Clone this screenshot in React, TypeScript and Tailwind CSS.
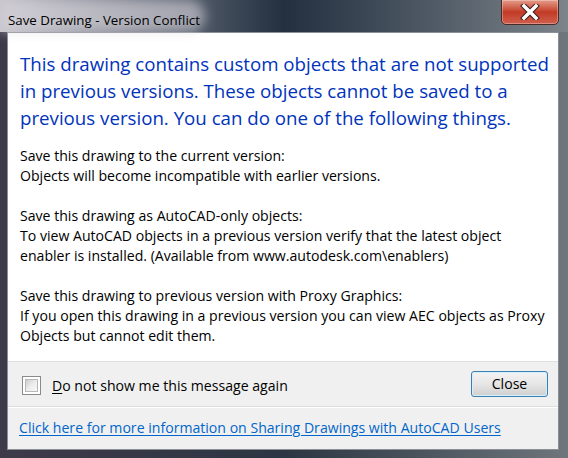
import React from 'react';

const uiFont = { fontFamily: '"Segoe UI", "Open Sans", "Noto Sans", sans-serif' };

function CloseButton() {
  return (
    <button
      type="button"
      className="relative mt-[-1px] flex h-[26px] w-[58px] items-center justify-center rounded-b-[5px] border border-[#4a2a26] bg-gradient-to-b from-[#e39c8a] via-[#c23a25] to-[#cf5f4c] shadow-[inset_0_0_0_1px_rgba(255,255,255,0.3)]"
      title="Close"
    >
      <svg width="20" height="16" viewBox="0 0 20 16">
        <path
          d="M4 2 L16 14 M16 2 L4 14"
          stroke="#3a1d18"
          strokeWidth="5.5"
          strokeLinecap="square"
        />
        <path
          d="M4 2 L16 14 M16 2 L4 14"
          stroke="#ffffff"
          strokeWidth="3.5"
          strokeLinecap="square"
        />
      </svg>
    </button>
  );
}

const body = [
  'Save this drawing to the current version:',
  'Objects will become incompatible with earlier versions.',
  '',
  'Save this drawing as AutoCAD-only objects:',
  'To view AutoCAD objects in a previous version verify that the latest object',
  'enabler is installed. (Available from www.autodesk.com\\enablers)',
  '',
  'Save this drawing to previous version with Proxy Graphics:',
  'If you open this drawing in a previous version you can view AEC objects as Proxy',
  'Objects but cannot edit them.',
];

export default function App() {
  return (
    <div
      className="flex h-[458px] w-[568px] flex-col overflow-hidden bg-gradient-to-r from-[#3e3a4a] via-[#2c3642] to-[#6f767c]"
      style={uiFont}
    >
      {/* title bar */}
      <div className="flex h-[32px] shrink-0 items-start justify-between bg-gradient-to-r from-[#c6c4cc] via-[#233040] to-[#7d848a] pr-[9px]">
        <div className="relative pl-[8px] pt-[7px]">
          <div className="absolute left-0 top-0 h-[32px] w-[205px] rounded-r-full bg-[#d8d6dc]/60 blur-[6px]" />
          <span className="relative whitespace-nowrap text-[13.3px] leading-[20px] text-black">
            Save Drawing - Version Conflict
          </span>
        </div>
        <CloseButton />
      </div>

      {/* client area */}
      <div className="ml-[7px] mr-[9px] flex h-[418px] shrink-0 flex-col border border-[#8a9096] bg-[#f0f0f0]">
        <div className="flex flex-col bg-white pb-[15px] pl-[12px] pt-[17px]">
          <div className="text-[18.7px] leading-[27px] text-[#0033bc]">
            <div className="whitespace-nowrap">This drawing contains custom objects that are not supported</div>
            <div className="whitespace-nowrap">in previous versions. These objects cannot be saved to a</div>
            <div className="whitespace-nowrap">previous version. You can do one of the following things.</div>
          </div>
          <div className="mt-[15px] text-[14.1px] leading-[20px] text-black">
            {body.map((line, i) => (
              <div key={i} className="h-[20px] whitespace-nowrap">
                {line}
              </div>
            ))}
          </div>
        </div>

        <div className="flex h-[45px] items-center justify-between border-t border-[#dfdfdf] pl-[14px] pr-[10px]">
          <label className="flex items-center gap-[11px] pt-[3px] text-[14.1px] leading-[20px] text-black">
            <span className="block h-[19px] w-[19px] border border-[#8a8a8a] bg-white p-[2px]">
              <span className="block h-full w-full border border-[#b8b8b8] bg-gradient-to-br from-[#cdcdcd] via-[#ececec] to-[#f8f8f8]" />
            </span>
            <span className="whitespace-nowrap">
              <span className="underline underline-offset-2">D</span>o not show me this message again
            </span>
          </label>
          <button
            type="button"
            className="h-[26px] w-[77px] rounded-[3px] border border-[#3c7fb1] bg-gradient-to-b from-[#f4f4f4] via-[#e6e6e6] to-[#cfcfcf] text-[14.1px] leading-[20px] text-black shadow-[inset_0_0_0_1px_#d6f0fb]"
          >
            Close
          </button>
        </div>

        <div className="flex flex-1 items-center border-t border-[#dcdcdc] pl-[11px] shadow-[inset_0_1px_0_#ffffff]">
          <a
            href="#"
            className="whitespace-nowrap text-[14.1px] leading-[20px] text-[#0066cc] underline underline-offset-2"
          >
            Click here for more information on Sharing Drawings with AutoCAD Users
          </a>
        </div>
      </div>
    </div>
  );
}
